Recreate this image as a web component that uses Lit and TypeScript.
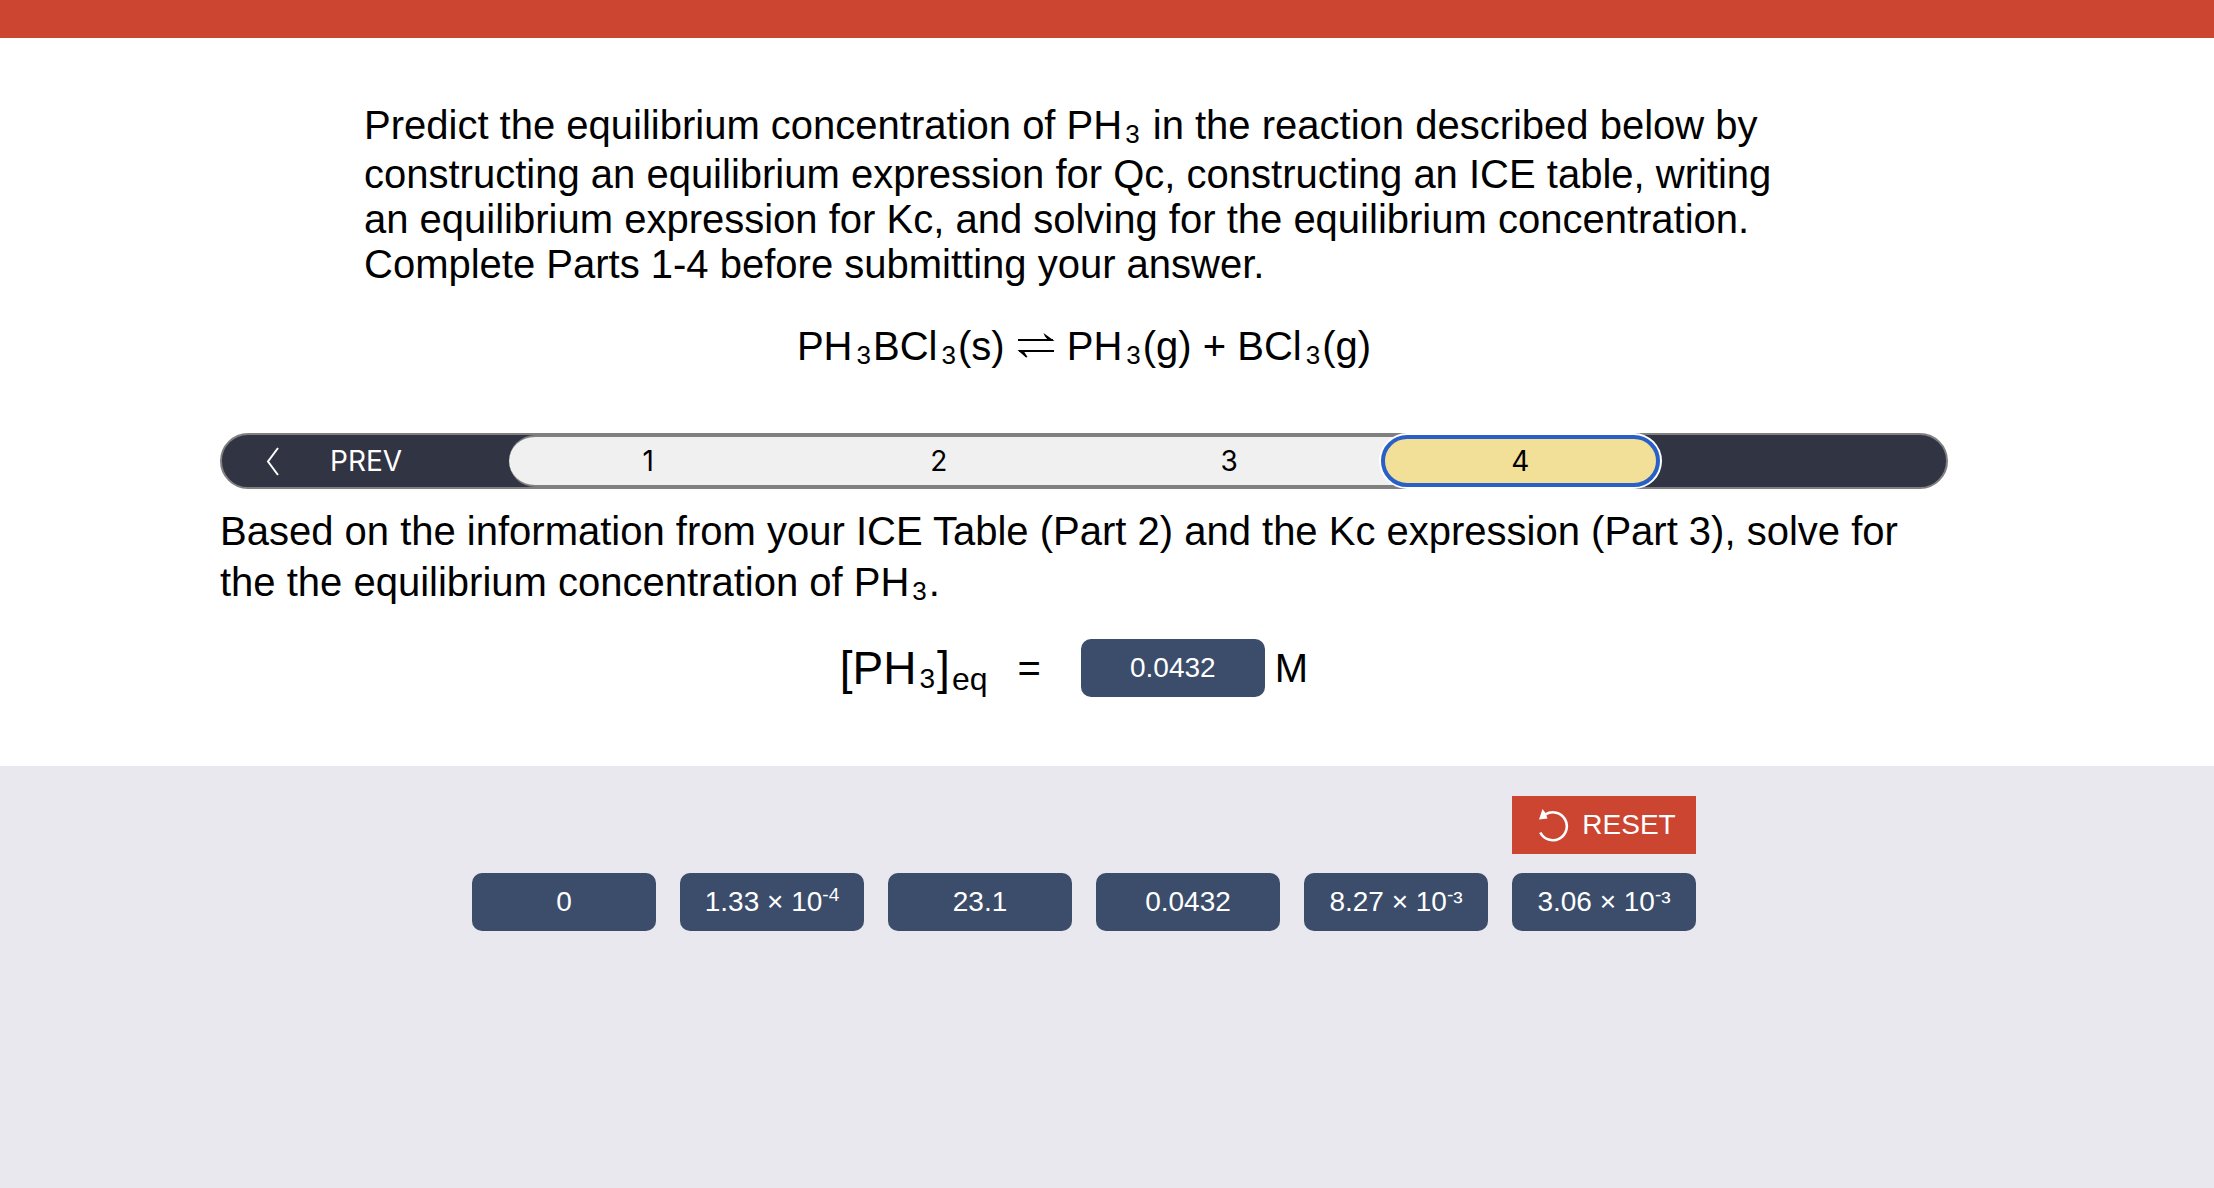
import { LitElement, html, css, svg } from "lit";
import { customElement, state } from "lit/decorators.js";

interface Choice {
  id: string;
  label: unknown;
}

const CHOICES: Choice[] = [
  { id: "0", label: "0" },
  { id: "1.33e-4", label: html`1.33 × 10<sup>-4</sup>` },
  { id: "23.1", label: "23.1" },
  { id: "0.0432", label: "0.0432" },
  { id: "8.27e-3", label: html`8.27 × 10<sup>-</sup>³` },
  { id: "3.06e-3", label: html`3.06 × 10<sup>-</sup>³` },
];

const chevron = svg`<path d="M12 1 L2 14.500 L12 28" fill="none" stroke="currentColor" stroke-width="2"/>`;

@customElement("app-root")
export class AppRoot extends LitElement {
  @state() private part = 4;
  @state() private answer: string | null = "0.0432";

  static styles = css`
    :host {
      display: flex;
      flex-direction: column;
      min-height: 100vh;
      background: #fff;
      color: #000;
      font-family: "Liberation Sans", Arial, sans-serif;
      font-size: 40px;
      line-height: 46px;
    }
    * {
      box-sizing: border-box;
    }
    button {
      font: inherit;
      border: 0;
      margin: 0;
      padding: 0;
      cursor: pointer;
    }
    p,
    h1 {
      margin: 0;
      font-size: inherit;
      font-weight: normal;
    }
    sub,
    sup {
      line-height: 0;
    }
    .topbar {
      height: 38px;
      background: #cc4530;
    }
    .problem,
    .pool {
      padding-right: 46px;
    }
    .problem {
      display: flex;
      flex-direction: column;
      align-items: center;
      padding-top: 60px;
      padding-bottom: 69px;
    }
    .prompt {
      width: 100%;
      max-width: 1440px;
      line-height: 45px;
    }
    .prompt .first {
      display: block;
      line-height: 54px;
    }
    .n {
      font-size: 26px;
      vertical-align: -4px;
      padding: 0 2px 0 3px;
    }
    .equation {
      margin-top: 36px;
    }
    .equation .n {
      padding: 0 2px 0 4px;
    }
    .arrow {
      vertical-align: baseline;
    }
    .stepper {
      display: grid;
      grid-template-columns: 283px 1fr 283px;
      width: 100%;
      max-width: 1728px;
      height: 56px;
      margin-top: 64px;
      border: 2px solid #808080;
      border-radius: 28px;
      background: #313543;
      font-family: Inter, sans-serif;
      font-size: 28px;
      line-height: 34px;
    }
    .prev {
      display: flex;
      align-items: center;
      gap: 49px;
      padding-left: 44px;
      background: none;
      color: #fff;
      border-radius: 28px;
    }
    .tabs {
      display: grid;
      grid-template-columns: repeat(4, 1fr);
      gap: 12px;
      margin: 0 4px;
      border-block: 2px solid #808080;
      border-radius: 26px;
      background: #f0f0f0;
    }
    .tab {
      color: #000;
      background: none;
      border-radius: 26px;
    }
    .tab.on {
      margin: -2px -1px -2px 0;
      border: 4px solid #2860c8;
      background: #f2df98;
      box-shadow: 0 0 0 2px #fff;
    }
    .question {
      width: 100%;
      max-width: 1728px;
      margin-top: 17px;
      line-height: 51px;
    }
    .solve {
      display: flex;
      align-items: center;
      margin-top: 31px;
      padding-right: 20px;
    }
    .term {
      font-size: 46px;
      line-height: 56px;
    }
    .term .n {
      font-size: 28px;
    }
    .eq {
      font-size: 32px;
      vertical-align: -6px;
      padding-left: 2px;
    }
    .equals {
      margin: 0 40px 0 30px;
    }
    .unit {
      margin-left: 10px;
    }
    .chip {
      width: 184px;
      height: 58px;
      border-radius: 10px;
      background: #3b4d6b;
      color: #fff;
      font-size: 28px;
      line-height: 32px;
      white-space: nowrap;
    }
    .chip sup {
      font-size: 19px;
      vertical-align: 10px;
    }
    .pool {
      flex: 1;
      display: flex;
      justify-content: center;
      align-items: flex-start;
      padding-top: 30px;
      background: #e9e8ee;
    }
    .tray {
      display: flex;
      flex-direction: column;
      align-items: flex-end;
      gap: 19px;
    }
    .row {
      display: flex;
      gap: 24px;
    }
    .reset {
      display: flex;
      align-items: center;
      justify-content: center;
      gap: 13px;
      width: 184px;
      height: 58px;
      padding-left: 6px;
      background: #cc4530;
      color: #fff;
      font-size: 28px;
      line-height: 32px;
    }
  `;

  private sub3 = html`<sub class="n">3</sub>`;

  private arrow = html`<svg class="arrow" width="40" height="28" viewBox="0 0 40 28" role="img" aria-label="⇌">
    <path d="M2 8 H37 M3 19 H38" fill="none" stroke="currentColor" stroke-width="2" />
    <path d="M27.500 1 L38.500 9 H33 L29 4.500 Z M1.500 18 H7 L11.500 25 L10 25.500 Z" fill="currentColor" />
  </svg>`;

  render() {
    const picked = CHOICES.find((c) => c.id === this.answer);
    return html`
      <header class="topbar"></header>
      <main class="problem">
        <h1 class="prompt">
          <span class="first">Predict the equilibrium concentration of PH${this.sub3} in the reaction described below by</span>
          constructing an equilibrium expression for Qc, constructing an ICE table, writing
          an equilibrium expression for Kc, and solving for the equilibrium concentration.
          Complete Parts 1-4 before submitting your answer.
        </h1>
        <p class="equation">PH${this.sub3}BCl${this.sub3}(s) ${this.arrow} PH${this.sub3}(g) + BCl${this.sub3}(g)</p>
        <nav class="stepper" aria-label="Parts">
          <button class="prev" @click=${() => (this.part = Math.max(1, this.part - 1))}>
            <svg width="15" height="29" viewBox="0 0 15 29" aria-hidden="true">${chevron}</svg>
            <span>PREV</span>
          </button>
          <div class="tabs">
            ${[1, 2, 3, 4].map(
              (n) => html`<button class="tab ${n === this.part ? "on" : ""}" @click=${() => (this.part = n)}>${n}</button>`
            )}
          </div>
        </nav>
        <p class="question">
          Based on the information from your ICE Table (Part 2) and the Kc expression (Part 3), solve for
          the the equilibrium concentration of PH${this.sub3}.
        </p>
        <div class="solve">
          <span class="term">[PH${this.sub3}]<sub class="eq">eq</sub></span>
          <span class="equals">=</span>
          <button class="chip" @click=${() => (this.answer = null)}>${picked?.label}</button>
          <span class="unit">M</span>
        </div>
      </main>
      <section class="pool">
        <div class="tray">
          <button class="reset" @click=${() => (this.answer = null)}>
            <svg width="31" height="34" viewBox="0 0 31 34" aria-hidden="true">
              <path d="M7.500 6.300 A14 14 0 1 1 2.300 24.500" fill="none" stroke="currentColor" stroke-width="2.600" />
              <path d="M4.500 1 L7.500 5 L9.500 10.500 L1 11.500 Z" fill="currentColor" />
            </svg>
            <span>RESET</span>
          </button>
          <div class="row">
            ${CHOICES.map((c) => html`<button class="chip" @click=${() => (this.answer = c.id)}>${c.label}</button>`)}
          </div>
        </div>
      </section>
    `;
  }
}
